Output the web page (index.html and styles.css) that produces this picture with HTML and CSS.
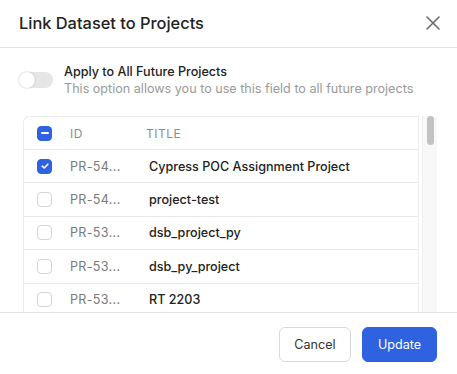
FILE: index.html
```html
<!DOCTYPE html>
<html lang="en">
<head>
  <meta charset="UTF-8" />
  <title>Link Dataset to Projects</title>
  <link rel="stylesheet" href="styles.css">
</head>
<body>
  <div class="modal">
    <div class="modal-header">
      <h1 class="modal-title">Link Dataset to Projects</h1>
      <button class="close-btn" aria-label="Close">
        <svg width="14" height="14" viewBox="0 0 14 14"><path d="M1 1L13 13M13 1L1 13" stroke="#6b6b6b" stroke-width="1.6" stroke-linecap="round"/></svg>
      </button>
    </div>
    <div class="modal-body">
      <div class="apply-row">
        <span class="toggle"><span class="knob"></span></span>
        <div class="apply-text">
          <div class="apply-label">Apply to All Future Projects</div>
          <div class="apply-desc">This option allows you to use this field to all future projects</div>
        </div>
      </div>
      <div class="table-area">
        <div class="table-wrap">
          <div class="row head">
            <span class="cb checked"><svg width="10" height="10" viewBox="0 0 10 10"><path d="M2 5H8" stroke="#fff" stroke-width="2" stroke-linecap="round"/></svg></span>
            <span class="col-id">ID</span>
            <span class="col-title">TITLE</span>
          </div>
          <div class="row">
            <span class="cb checked"><svg width="10" height="10" viewBox="0 0 10 10"><path d="M2.2 5.2L4.2 7L7.8 3.2" stroke="#fff" stroke-width="1.6" fill="none" stroke-linecap="round" stroke-linejoin="round"/></svg></span>
            <span class="col-id">PR-54...</span>
            <span class="col-title">Cypress POC Assignment Project</span>
          </div>
          <div class="row">
            <span class="cb"></span>
            <span class="col-id">PR-54...</span>
            <span class="col-title">project-test</span>
          </div>
          <div class="row">
            <span class="cb"></span>
            <span class="col-id">PR-53...</span>
            <span class="col-title">dsb_project_py</span>
          </div>
          <div class="row">
            <span class="cb"></span>
            <span class="col-id">PR-53...</span>
            <span class="col-title">dsb_py_project</span>
          </div>
          <div class="row">
            <span class="cb"></span>
            <span class="col-id">PR-53...</span>
            <span class="col-title">RT 2203</span>
          </div>
        </div>
        <div class="scroll-track"><span class="scroll-thumb"></span></div>
      </div>
    </div>
    <div class="modal-footer">
      <button class="btn btn-cancel">Cancel</button>
      <button class="btn btn-primary">Update</button>
    </div>
  </div>
</body>
</html>
```

FILE: styles.css
```css
body {
  margin: 0;
  background: #fff;
  font-family: Inter, "Noto Sans", sans-serif;
  color: #222;
}
.modal {
  width: 457px;
  height: 374px;
  display: flex;
  flex-direction: column;
  overflow: hidden;
}
.modal-header {
  height: 48px;
  box-sizing: border-box;
  border-bottom: 1px solid #e3e3e3;
  display: flex;
  align-items: center;
  justify-content: space-between;
  padding: 0 17px 2px 19px;
}
.modal-title {
  margin: 0;
  font-size: 16.4px;
  font-weight: 500;
  color: #222;
}
.close-btn {
  background: none;
  border: none;
  padding: 0;
  width: 14px;
  height: 14px;
  display: flex;
  cursor: pointer;
}
.modal-body {
  flex: 1;
  overflow: hidden;
  padding: 15px 20px 0 18px;
}
.apply-row {
  display: flex;
  align-items: center;
  gap: 11px;
}
.toggle {
  width: 34px;
  height: 16px;
  border-radius: 8px;
  background: #e6e6e6;
  position: relative;
  flex-shrink: 0;
  margin-left: 1px;
}
.knob {
  position: absolute;
  left: 0;
  top: 0;
  width: 16px;
  height: 16px;
  border-radius: 50%;
  background: #fff;
  box-shadow: 0 0 2px rgba(0,0,0,0.25);
}
.apply-label {
  font-size: 12.6px;
  line-height: 17px;
  font-weight: 500;
  color: #222;
}
.apply-desc {
  font-size: 12.6px;
  line-height: 17px;
  color: #9a9a9a;
}
.table-area {
  display: flex;
  margin: 19px 0 0 5px;
  gap: 3px;
}
.table-wrap {
  width: 396px;
  box-sizing: border-box;
  border: 1px solid #ebebeb;
  border-bottom: none;
  border-top-left-radius: 6px;
}
.row {
  height: 33.4px;
  box-sizing: border-box;
  border-bottom: 1px solid #e8e8e8;
  display: flex;
  align-items: center;
  padding-left: 13px;
  font-size: 12.6px;
}
.row.head {
  height: 33px;
}
.cb {
  width: 15px;
  height: 15px;
  box-sizing: border-box;
  border: 1px solid #d4d4d4;
  border-radius: 4px;
  background: #fff;
  display: flex;
  align-items: center;
  justify-content: center;
  flex-shrink: 0;
}
.cb.checked {
  background: #2f62e0;
  border-color: #2f62e0;
}
.col-id {
  margin-left: 18px;
  width: 79px;
  color: #7a7a7a;
  letter-spacing: 0.3px;
}
.col-title {
  color: #222;
  font-weight: 500;
}
.head .col-id,
.head .col-title {
  color: #8c8c8c;
  font-weight: 400;
  font-size: 12px;
  letter-spacing: 0.5px;
}
.head .col-title {
  margin-left: -3px;
}
.scroll-track {
  width: 15px;
  box-sizing: border-box;
  border-left: 1px solid #ececec;
  background: #f8f8f8;
  padding: 0 3px 0 3px;
  display: flex;
  justify-content: center;
}
.scroll-thumb {
  width: 7px;
  height: 29px;
  border-radius: 4px;
  background: #c2c2c2;
}
.modal-footer {
  height: 62px;
  box-sizing: border-box;
  border-top: 1px solid #e3e3e3;
  display: flex;
  justify-content: flex-end;
  align-items: flex-start;
  gap: 11px;
  padding: 14px 20px 0 0;
}
.btn {
  height: 35px;
  border-radius: 6px;
  font-family: inherit;
  font-size: 12.6px;
  cursor: pointer;
}
.btn-cancel {
  width: 72px;
  background: #fff;
  border: 1px solid #d9d9d9;
  color: #333;
}
.btn-primary {
  width: 75px;
  background: #2f62e0;
  border: 1px solid #2f62e0;
  color: #fff;
}
```
